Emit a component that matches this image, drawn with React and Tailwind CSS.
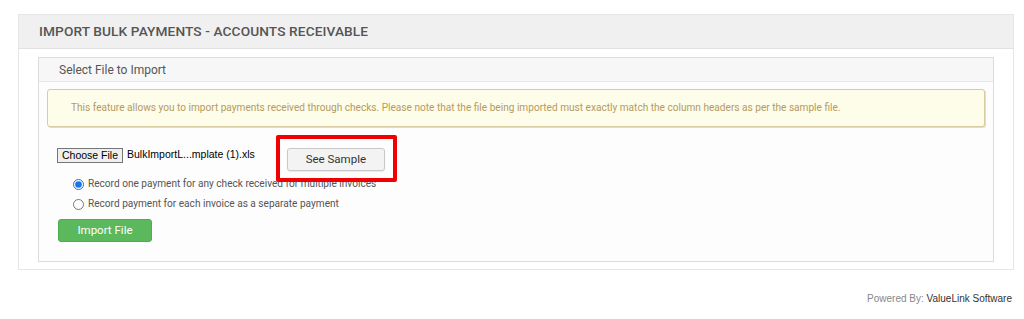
import { useState } from "react";

const App = () => {
  const [mode, setMode] = useState("one");

  return (
    <div className="w-[1024px] h-[319px] bg-white font-['Roboto',sans-serif] pt-[14px]">
      {/* outer panel */}
      <div className="ml-[18px] mr-[10px] border border-[#e6e6e6]">
        <div className="h-[34px] bg-[#f0f0f0] border-b border-[#e1e1e1] flex items-center pl-[20px]">
          <h2 className="text-[13.7px] text-[#555] font-medium tracking-[0.1px]">IMPORT BULK PAYMENTS - ACCOUNTS RECEIVABLE</h2>
        </div>

        <div className="pl-[19px] pr-[19px] pt-[8px] pb-[7px]">
          {/* inner panel */}
          <div className="border border-[#dcdcdc]">
            <div className="h-[24px] bg-[#f7f7f7] border-b border-[#e6e6e6] flex items-center pl-[20px]">
              <span className="text-[12px] text-[#555]">Select File to Import</span>
            </div>

            <div className="bg-[#fdfdfd] px-[8px] pt-[7px] pb-[19px]">
              <div className="h-[38px] bg-[#fdfdea] border border-[#d9cba3] rounded-[3px] flex items-center pl-[23px] shadow-[1px_1px_0_#e4dcc4]">
                <p className="text-[10.1px] text-[#b59a62]">
                  This feature allows you to import payments received through checks. Please note that the file being imported must exactly match the column headers as per the sample file.
                </p>
              </div>

              {/* file row */}
              <div className="flex items-center mt-[20px] pl-[10px] h-[23px]">
                <div className="flex items-center font-['Liberation_Sans',Arial,sans-serif] text-[10.5px] text-black -mt-[7px]">
                  <button className="h-[15px] px-[4px] bg-[#efefef] border border-[#767676] leading-none">Choose File</button>
                  <span className="ml-[4px]">BulkImportL...mplate (1).xls</span>
                </div>
                <div className="relative ml-[32px]">
                  <button className="w-[98px] h-[23px] bg-[#f3f3f3] border border-[#c8c8c8] rounded-[3px] text-[11.5px] text-[#333] shadow-[0_1px_1px_rgba(0,0,0,0.08)]">
                    See Sample
                  </button>
                  <div className="absolute left-[-11px] top-[-11px] w-[121px] h-[47px] border-[4px] border-[#f00000] rounded-[2px] pointer-events-none"></div>
                </div>
              </div>

              {/* radios */}
              <div className="pl-[26px] mt-[7px] flex flex-col gap-[6px] text-[10.1px] text-[#555]">
                <label className="flex items-center h-[14px]">
                  <input
                    type="radio"
                    name="mode"
                    checked={mode === "one"}
                    onChange={() => setMode("one")}
                    className="w-[11px] h-[11px] m-0 accent-[#1a73e8]"
                  />
                  <span className="ml-[4px]">Record one payment for any check received for multiple invoices</span>
                </label>
                <label className="flex items-center h-[14px]">
                  <input
                    type="radio"
                    name="mode"
                    checked={mode === "each"}
                    onChange={() => setMode("each")}
                    className="w-[11px] h-[11px] m-0 accent-[#1a73e8]"
                  />
                  <span className="ml-[4px]">Record payment for each invoice as a separate payment</span>
                </label>
              </div>

              <button className="mt-[8px] ml-[11px] w-[94px] h-[23px] bg-[#5cb85c] border border-[#4cae4c] rounded-[3px] text-white text-[11.5px]">
                Import File
              </button>
            </div>
          </div>
        </div>
      </div>

      <div className="flex justify-end pr-[12px] mt-[21px] font-['Liberation_Sans',Arial,sans-serif] text-[10px]">
        <span className="text-[#888]">Powered By:&nbsp;</span>
        <span className="text-[#333]">ValueLink Software</span>
      </div>
    </div>
  );
};

export default App;
